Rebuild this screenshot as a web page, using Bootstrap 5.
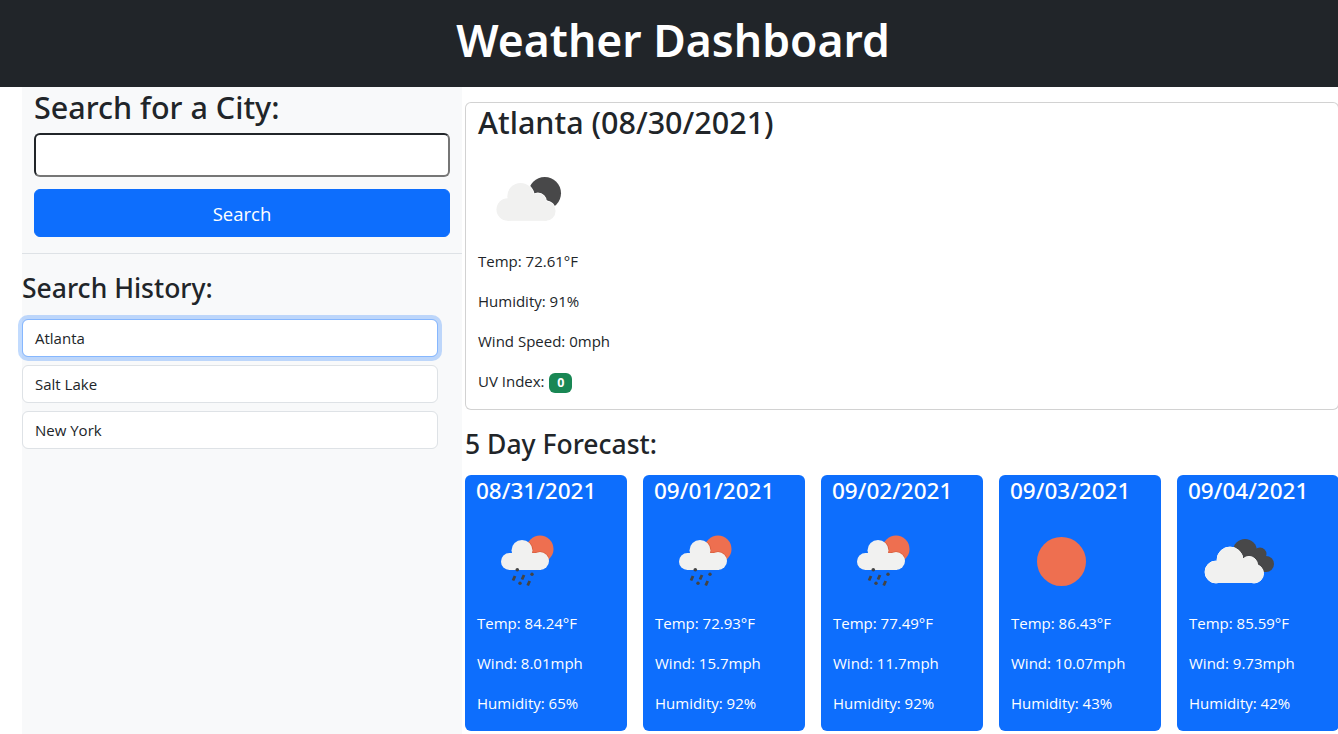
<!DOCTYPE html>
<html lang="en">
<head>
<meta charset="utf-8">
<title>Weather Dashboard</title>
<link rel="stylesheet" href="https://cdn.jsdelivr.net/npm/bootstrap@5.3.0/dist/css/bootstrap.min.css">
<style>
html,body{overflow-x:hidden;height:100%}
body{font-family:"Open Sans","Noto Sans","Liberation Sans",sans-serif;font-size:15px;color:#212529}
h1,h2,h3,h4{font-family:"Noto Sans","Open Sans",sans-serif}
.wd-top{height:87px;width:1346px}
.wd-top h1{font-size:44.500px;line-height:80px;font-weight:600;margin:0}
.wd-shell{padding-left:22px;min-height:647px}
.wd-side{flex:0 0 440px;background:#f8f9fa}
.wd-search{padding:0 12px}
.wd-search h2{font-size:30.500px;font-weight:500;line-height:38px;margin:1px 0 7px}
.wd-input{height:44px;border:2px solid;border-color:#212529 #767676 #767676 #212529;border-radius:6px}
.wd-go{height:48px;margin-top:12px;font-size:18.500px;border-radius:6px;padding-top:9px;padding-bottom:7px}
.wd-side hr{margin:16px 0 17px;opacity:1;border-color:#dee2e6}
.wd-side h3{font-size:26.500px;font-weight:500;line-height:34px;margin:0 0 14px}
.wd-hist{width:416px;height:38px;font-size:15px;margin-bottom:8px;text-align:left;color:#212529}
.wd-hist.wd-on{border-color:#86b7fe;box-shadow:0 0 0 4px rgba(13,110,253,.25)}
.wd-main{flex:0 0 882px;margin-left:3px;padding-top:15px}
.wd-now{width:874px;height:308px;padding:0 12px}
.wd-now h2{font-size:30.500px;font-weight:500;line-height:38px;margin:0 0 3px}
.wd-pic{display:block;margin-bottom:6px}
.wd-now p,.wd-day p{margin:0 0 16px;line-height:24px}
.wd-uv{font-size:12.500px;padding:.32em .62em;margin-left:1px}
.wd-main h3{font-size:26.500px;font-weight:500;line-height:34px;margin:17px 0 14px}
.wd-days{gap:16px}
.wd-day{flex:0 0 162px;height:256px;padding:1px 12px 0;border-radius:6px}
.wd-day h4{font-size:22.500px;font-weight:500;line-height:29px;margin:0 0 0 -1px}
</style>
</head>
<body>
<svg width="0" height="0" class="position-absolute">
  <defs>
    <g id="cloudbig"><circle cx="29.500" cy="66.500" r="11.500"/><circle cx="42.500" cy="53" r="13.500"/><circle cx="60" cy="58.500" r="8.500"/><circle cx="68" cy="68" r="10"/><rect x="29" y="58" width="40" height="20"/></g>
    <g id="cloudrain"><circle cx="32.500" cy="56.500" r="8.500"/><circle cx="45" cy="45.5" r="10.5"/><circle cx="63" cy="56" r="9"/><rect x="32" y="48" width="32" height="17"/></g>
    <clipPath id="sunclip"><circle cx="63" cy="44" r="13.500"/></clipPath>
    <g id="rainicon">
      <circle cx="63" cy="44" r="13.5" fill="#ee6f50"/>
      <g clip-path="url(#sunclip)"><use href="#cloudrain" fill="#d9603f" stroke="#d9603f" stroke-width="1.400"/></g>
      <use href="#cloudrain" fill="#f1f1f0"/>
      <circle cx="40.3" cy="64.7" r="1.8" fill="#444"/>
      <circle cx="55" cy="69.3" r="1.7" fill="#444"/>
      <circle cx="43" cy="78.3" r="1.7" fill="#444"/>
      <path d="M38 71 36 75.5M47 70 45 74.5M52.700 76 50.700 80.500" stroke="#444" stroke-width="2.800" fill="none"/>
    </g>
  </defs>
</svg>
<header class="wd-top bg-dark text-white text-center"><h1>Weather Dashboard</h1></header>
<div class="wd-shell d-flex">
  <aside class="wd-side">
    <form class="wd-search">
      <h2>Search for a City:</h2>
      <input class="form-control wd-input" type="text" aria-label="City">
      <button type="button" class="btn btn-primary btn-lg w-100 wd-go">Search</button>
    </form>
    <hr>
    <h3>Search History:</h3>
    <button type="button" class="form-control wd-hist wd-on">Atlanta</button>
    <button type="button" class="form-control wd-hist">Salt Lake</button>
    <button type="button" class="form-control wd-hist">New York</button>
  </aside>
  <main class="wd-main">
    <section class="wd-now card">
      <h2>Atlanta (08/30/2021)</h2>
      <svg class="wd-pic" width="100" height="100" viewBox="0 0 100 100" role="img" aria-label="Partly cloudy night">
        <circle cx="67" cy="50" r="16.500" fill="#484849"/>
        <use href="#cloudbig" fill="#fff" stroke="#fff" stroke-width="1.500"/>
        <use href="#cloudbig" fill="#f1f1f0"/>
      </svg>
      <p>Temp: 72.61°F</p>
      <p>Humidity: 91%</p>
      <p>Wind Speed: 0mph</p>
      <p>UV Index: <span class="badge text-bg-success wd-uv">0</span></p>
    </section>
    <h3>5 Day Forecast:</h3>
    <div class="wd-days d-flex">
      <article class="wd-day text-bg-primary">
        <h4>08/31/2021</h4>
        <svg class="wd-pic" width="100" height="100" viewBox="0 0 100 100" role="img" aria-label="Rain"><use href="#rainicon"/></svg>
        <p>Temp: 84.24°F</p><p>Wind: 8.01mph</p><p>Humidity: 65%</p>
      </article>
      <article class="wd-day text-bg-primary">
        <h4>09/01/2021</h4>
        <svg class="wd-pic" width="100" height="100" viewBox="0 0 100 100" role="img" aria-label="Rain"><use href="#rainicon"/></svg>
        <p>Temp: 72.93°F</p><p>Wind: 15.7mph</p><p>Humidity: 92%</p>
      </article>
      <article class="wd-day text-bg-primary">
        <h4>09/02/2021</h4>
        <svg class="wd-pic" width="100" height="100" viewBox="0 0 100 100" role="img" aria-label="Rain"><use href="#rainicon"/></svg>
        <p>Temp: 77.49°F</p><p>Wind: 11.7mph</p><p>Humidity: 92%</p>
      </article>
      <article class="wd-day text-bg-primary">
        <h4>09/03/2021</h4>
        <svg class="wd-pic" width="100" height="100" viewBox="0 0 100 100" role="img" aria-label="Clear"><circle cx="50.500" cy="56.500" r="24.500" fill="#ee6f50"/></svg>
        <p>Temp: 86.43°F</p><p>Wind: 10.07mph</p><p>Humidity: 43%</p>
      </article>
      <article class="wd-day text-bg-primary">
        <h4>09/04/2021</h4>
        <svg class="wd-pic" width="100" height="100" viewBox="0 0 100 100" role="img" aria-label="Cloudy">
          <g fill="#484849"><circle cx="56" cy="46" r="12"/><circle cx="71" cy="49" r="6.500"/><circle cx="77" cy="59" r="8"/><rect x="50" y="48" width="27" height="19"/></g>
          <g fill="#f1f1f0" stroke="#fff" stroke-width="1"><circle cx="27" cy="67" r="11"/><circle cx="41" cy="55" r="13"/><circle cx="60" cy="60" r="8.500"/><circle cx="65" cy="68.500" r="9.500"/></g>
          <g fill="#f1f1f0"><circle cx="27" cy="67" r="11"/><circle cx="41" cy="55" r="13"/><circle cx="60" cy="60" r="8.500"/><circle cx="65" cy="68.500" r="9.500"/><rect x="27" y="58" width="38" height="20"/></g>
        </svg>
        <p>Temp: 85.59°F</p><p>Wind: 9.73mph</p><p>Humidity: 42%</p>
      </article>
    </div>
  </main>
</div>
<script src="https://cdn.jsdelivr.net/npm/bootstrap@5.3.0/dist/js/bootstrap.bundle.min.js"></script>
</body>
</html>
